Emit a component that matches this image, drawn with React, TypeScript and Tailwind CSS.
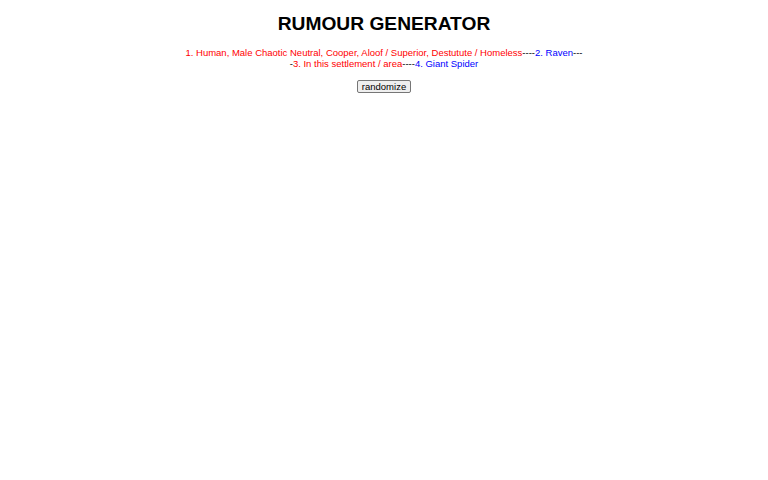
import React from "react";

export default function App() {
  return (
    <div className="min-h-screen bg-white text-center" style={{ fontFamily: '"Liberation Sans", Arial, sans-serif' }}>
      <h1 className="pt-[12px] text-[19.2px] font-bold leading-[23px] text-black">RUMOUR GENERATOR</h1>
      <div className="mx-auto mt-[12px] w-[400px] text-[9.5px] leading-[11px]">
        <span className="text-[#ff0000]">1. Human, Male Chaotic Neutral, Cooper, Aloof / Superior, Destutute / Homeless</span>
        <span className="text-black">----</span>
        <span className="text-[#0000ff]">2. Raven</span>
        <span className="text-black">----</span>
        <span className="text-[#ff0000]">3. In this settlement / area</span>
        <span className="text-black">----</span>
        <span className="text-[#0000ff]">4. Giant Spider</span>
      </div>
      <div className="mt-[11px] flex justify-center">
        <button className="rounded-[2px] border border-[#767676] bg-[#efefef] px-[4px] text-[9.5px] leading-[11px] text-black">randomize</button>
      </div>
    </div>
  );
}
